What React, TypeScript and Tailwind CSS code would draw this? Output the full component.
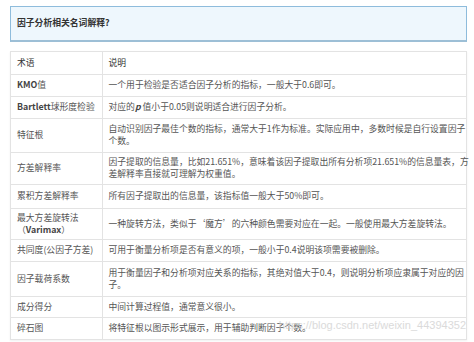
import React from "react";

const rows: { term: React.ReactNode; desc: React.ReactNode; h: string }[] = [
  { term: <><b className="font-bold text-[#444]">KMO</b>值</>, desc: "一个用于检验是否适合因子分析的指标，一般大于0.6即可。", h: "h-[22px]" },
  { term: <><b className="font-bold text-[#444]">Bartlett</b>球形度检验</>, desc: <>对应的<b className="font-bold italic text-[#444]">p</b> 值小于0.05则说明适合进行因子分析。</>, h: "h-[22px]" },
  { term: "特征根", desc: <>自动识别因子最佳个数的指标，通常大于1作为标准。实际应用中，多数时候是自行设置因子<br />个数。</>, h: "h-[34px]" },
  { term: "方差解释率", desc: <>因子提取的信息量，比如21.651%，意味着该因子提取出所有分析项21.651%的信息量表，方<br />差解释率直接就可理解为权重值。</>, h: "h-[32px]" },
  { term: "累积方差解释率", desc: "所有因子提取出的信息量，该指标值一般大于50%即可。", h: "h-[24px]" },
  { term: <>最大方差旋转法<br />（<b className="font-bold text-[#444]">Varimax</b>）</>, desc: "一种旋转方法，类似于‘魔方’的六种颜色需要对应在一起。一般使用最大方差旋转法。", h: "h-[31px]" },
  { term: "共同度(公因子方差)", desc: "可用于衡量分析项是否有意义的项，一般小于0.4说明该项需要被删除。", h: "h-[22px]" },
  { term: "因子载荷系数", desc: <>用于衡量因子和分析项对应关系的指标，其绝对值大于0.4，则说明分析项应隶属于对应的因<br />子。</>, h: "h-[35px]" },
  { term: "成分得分", desc: "中间计算过程值，通常意义很小。", h: "h-[21px]" },
  { term: "碎石图", desc: "将特征根以图示形式展示，用于辅助判断因子个数。", h: "h-[22px]" },
];

export default function App() {
  return (
    <div
      className="relative w-[474px] h-[342px] bg-white pl-[10px] pt-[6px] overflow-hidden"
      style={{ fontFamily: '"Noto Sans CJK SC", "Noto Sans", sans-serif' }}
    >
      <div className="w-[457px] h-[36px] bg-[#eef7fd] border border-[#8ebcdc] border-b-2 border-b-[#9dbfd6] flex items-center pl-[6px]">
        <span className="text-[8.8px] font-bold text-[#333] leading-none">因子分析相关名词解释?</span>
      </div>
      <div className="mt-[9px] w-[457px] border border-[#e3e3e3] shadow-[0_1px_2px_rgba(0,0,0,0.06)]">
        <table className="w-full border-collapse text-[8.8px] leading-[12px] text-[#555] table-fixed">
          <colgroup>
            <col className="w-[91px]" />
            <col />
          </colgroup>
          <tbody>
            <tr className="h-[22px]">
              <td className="px-[6px] text-[#333] border-b border-r border-[#e3e3e3] align-middle">术语</td>
              <td className="px-[6px] text-[#333] border-b border-[#e3e3e3] align-middle">说明</td>
            </tr>
            {rows.map((r, i) => (
              <tr key={i} className={r.h}>
                <td className={`pl-[6px] pr-[2px] whitespace-nowrap align-middle border-r border-[#e3e3e3] ${i < rows.length - 1 ? "border-b" : ""}`}>{r.term}</td>
                <td className={`pl-[6px] pr-[2px] whitespace-nowrap align-middle border-[#e3e3e3] ${i < rows.length - 1 ? "border-b" : ""}`}>{r.desc}</td>
              </tr>
            ))}
          </tbody>
        </table>
      </div>
      <div
        className="absolute right-[8px] top-[320px] text-[11px] leading-none text-[#d2d2d2] opacity-80 pointer-events-none"
        style={{ fontFamily: '"Liberation Sans", Arial, sans-serif' }}
      >
        https://blog.csdn.net/weixin_44394352
      </div>
    </div>
  );
}
